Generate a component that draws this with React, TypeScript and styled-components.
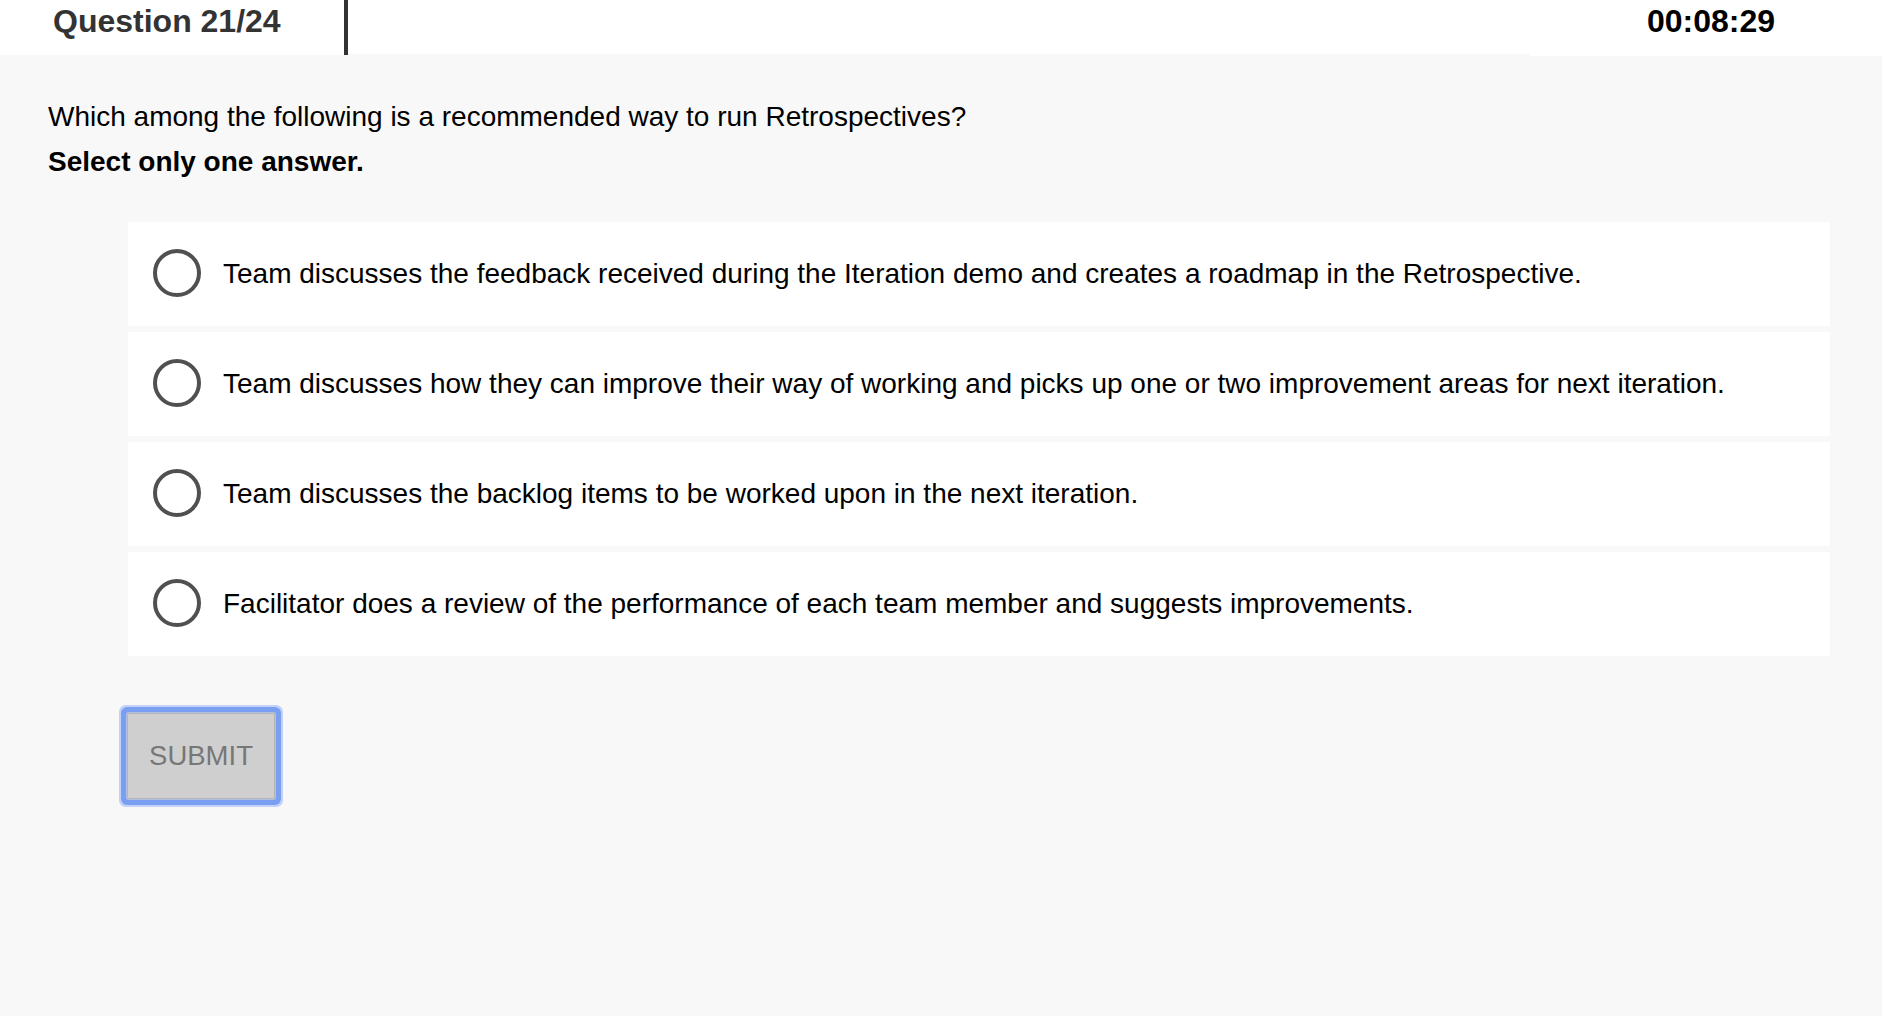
import React from 'react';
import styled, { createGlobalStyle } from 'styled-components';

const GlobalStyle = createGlobalStyle`
    html, body {
        margin: 0;
        padding: 0;
        background-color: #f8f8f8;
        font-family: "Liberation Sans", Arial, sans-serif;
    }
`;

const Page = styled.div`
    min-height: 100vh;
    background-color: #f8f8f8;
`;

const Header = styled.div`
    display: flex;
    align-items: flex-start;
`;

const TitleBlock = styled.div`
    width: 348px;
    height: 55px;
    padding: 5px 0 0 53px;
    box-sizing: border-box;
    background-color: #fff;
    border-right: 4px solid #333;
    font-size: 32px;
    line-height: 32px;
    font-weight: 700;
    color: #333;
`;

const HeaderFill = styled.div`
    flex-grow: 1;
    height: 54px;
    background-color: #fff;
`;

const TimerBlock = styled.div`
    width: 352px;
    height: 56px;
    padding: 5px 0 0 117px;
    box-sizing: border-box;
    background-color: #fff;
    font-size: 32px;
    line-height: 32px;
    font-weight: 700;
    color: #000;
`;

const Main = styled.div`
    padding: 38px 52px 0 48px;
`;

const Prompt = styled.p<{ bold?: boolean }>`
    margin: 0;
    font-size: 28px;
    line-height: 45px;
    font-weight: ${p => (p.bold ? 700 : 400)};
    color: #000;
`;

const OptionList = styled.ul`
    list-style-type: none;
    margin: 38px 0 0 80px;
    padding: 0;
    display: flex;
    flex-direction: column;
    gap: 6px;
`;

const Option = styled.li`
    display: flex;
    align-items: center;
    gap: 22px;
    height: 104px;
    padding-left: 25px;
    background-color: #fff;
    font-size: 28px;
    color: #000;
    cursor: pointer;
`;

const Radio = styled.span`
    flex-shrink: 0;
    width: 48px;
    height: 48px;
    margin-top: -3px;
    box-sizing: border-box;
    border: 4px solid #505050;
    border-radius: 50%;
    background-color: #fff;
`;

const SubmitButton = styled.button`
    display: block;
    margin: 57px 0 0 79px;
    width: 148px;
    height: 86px;
    box-sizing: border-box;
    border: 1px solid #b4b4b4;
    border-radius: 2px;
    background-color: #cfcfcf;
    color: #777;
    font-family: "Liberation Sans", Arial, sans-serif;
    font-size: 27.5px;
    box-shadow: 0 0 0 1px #b3c2e4, 0 0 0 6px #7b9ff0, 0 0 0 8px #c3d2f7;
`;

const options = [
    'Team discusses the feedback received during the Iteration demo and creates a roadmap in the Retrospective.',
    'Team discusses how they can improve their way of working and picks up one or two improvement areas for next iteration.',
    'Team discusses the backlog items to be worked upon in the next iteration.',
    'Facilitator does a review of the performance of each team member and suggests improvements.',
];

export default () => (
    <Page>
        <GlobalStyle />
        <Header>
            <TitleBlock>Question 21/24</TitleBlock>
            <HeaderFill />
            <TimerBlock>00:08:29</TimerBlock>
        </Header>
        <Main>
            <Prompt>Which among the following is a recommended way to run Retrospectives?</Prompt>
            <Prompt bold>Select only one answer.</Prompt>
            <OptionList>
                {options.map(text => (
                    <Option key={text}>
                        <Radio />
                        {text}
                    </Option>
                ))}
            </OptionList>
            <SubmitButton>SUBMIT</SubmitButton>
        </Main>
    </Page>
);
